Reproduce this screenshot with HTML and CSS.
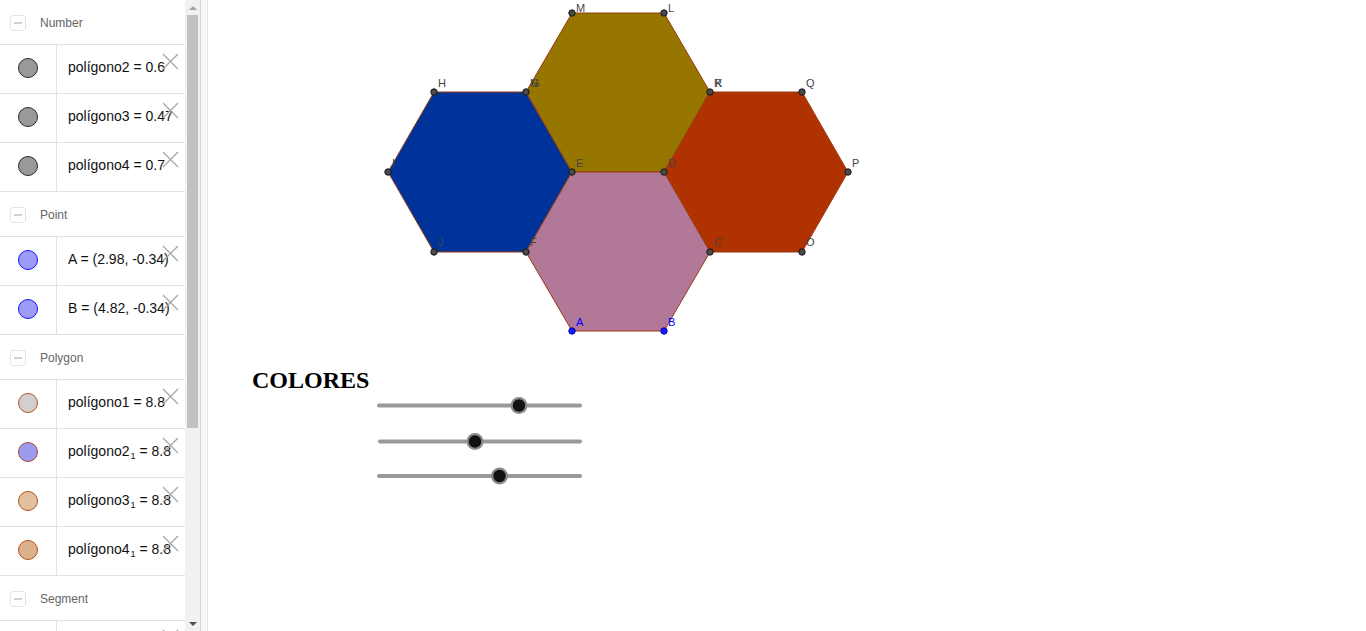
FILE: index.html
```html
<!DOCTYPE html>
<html>
<head>
<meta charset="utf-8">
<title>COLORES</title>
<link rel="stylesheet" href="styles.css">
</head>
<body>
<div class="app">
  <aside class="algebra">
    <div class="list">
      <div class="group"><span class="toggle"></span><span class="group-name">Number</span></div>
      <div class="item"><div class="marble-cell"><span class="marble m-number"></span></div><div class="formula">polígono2 = 0.6</div><svg class="close" viewBox="0 0 17 17"><path d="M1 1L16 16M16 1L1 16"/></svg></div>
      <div class="item"><div class="marble-cell"><span class="marble m-number"></span></div><div class="formula">polígono3 = 0.47</div><svg class="close" viewBox="0 0 17 17"><path d="M1 1L16 16M16 1L1 16"/></svg></div>
      <div class="item"><div class="marble-cell"><span class="marble m-number"></span></div><div class="formula">polígono4 = 0.7</div><svg class="close" viewBox="0 0 17 17"><path d="M1 1L16 16M16 1L1 16"/></svg></div>

      <div class="group"><span class="toggle"></span><span class="group-name">Point</span></div>
      <div class="item"><div class="marble-cell"><span class="marble m-point"></span></div><div class="formula">A = (2.98, -0.34)</div><svg class="close" viewBox="0 0 17 17"><path d="M1 1L16 16M16 1L1 16"/></svg></div>
      <div class="item"><div class="marble-cell"><span class="marble m-point"></span></div><div class="formula">B = (4.82, -0.34)</div><svg class="close" viewBox="0 0 17 17"><path d="M1 1L16 16M16 1L1 16"/></svg></div>

      <div class="group"><span class="toggle"></span><span class="group-name">Polygon</span></div>
      <div class="item"><div class="marble-cell"><span class="marble m-poly1"></span></div><div class="formula">polígono1 = 8.8</div><svg class="close" viewBox="0 0 17 17"><path d="M1 1L16 16M16 1L1 16"/></svg></div>
      <div class="item"><div class="marble-cell"><span class="marble m-poly2"></span></div><div class="formula">polígono2<sub>1</sub> = 8.8</div><svg class="close" viewBox="0 0 17 17"><path d="M1 1L16 16M16 1L1 16"/></svg></div>
      <div class="item"><div class="marble-cell"><span class="marble m-poly3"></span></div><div class="formula">polígono3<sub>1</sub> = 8.8</div><svg class="close" viewBox="0 0 17 17"><path d="M1 1L16 16M16 1L1 16"/></svg></div>
      <div class="item"><div class="marble-cell"><span class="marble m-poly4"></span></div><div class="formula">polígono4<sub>1</sub> = 8.8</div><svg class="close" viewBox="0 0 17 17"><path d="M1 1L16 16M16 1L1 16"/></svg></div>

      <div class="group"><span class="toggle"></span><span class="group-name">Segment</span></div>
      <div class="item"><div class="marble-cell"><span class="marble m-seg"></span></div><div class="formula"></div><svg class="close" viewBox="0 0 17 17"><path d="M1 1L16 16M16 1L1 16"/></svg></div>
    </div>
    <div class="scrollbar">
      <div class="sb-btn"><span class="arrow-up"></span></div>
      <div class="thumb"></div>
      <div class="sb-track"></div>
      <div class="sb-btn"><span class="arrow-down"></span></div>
    </div>
  </aside>
  <div class="splitter"></div>
  <main class="canvas">
    <svg class="graphics" width="1158" height="631" viewBox="208 0 1158 631">
      <g class="hex">
        <polygon points="434,92 526,92 572,172 526,252 434,252 388,172" fill="#003399"/>
        <polygon points="572,13 664,13 710,92 664,172 572,172 526,92" fill="#977600"/>
        <polygon points="710,92 802,92 848,172 802,252 710,252 664,172" fill="#b03200"/>
        <polygon points="572,331 664,331 710,252 664,172 572,172 526,252" fill="#b27898"/>
      </g>
      <g class="pts">
        <circle cx="434" cy="92" r="3.2"/><circle cx="526" cy="92" r="3.2"/>
        <circle cx="572" cy="13" r="3.2"/><circle cx="664" cy="13" r="3.2"/>
        <circle cx="710" cy="92" r="3.2"/><circle cx="802" cy="92" r="3.2"/>
        <circle cx="388" cy="172" r="3.2"/><circle cx="572" cy="172" r="3.2"/>
        <circle cx="664" cy="172" r="3.2"/><circle cx="848" cy="172" r="3.2"/>
        <circle cx="434" cy="252" r="3.2"/><circle cx="526" cy="252" r="3.2"/>
        <circle cx="710" cy="252" r="3.2"/><circle cx="802" cy="252" r="3.2"/>
        <circle class="blue" cx="572" cy="331" r="3.2"/><circle class="blue" cx="664" cy="331" r="3.2"/>
      </g>
      <g class="labels">
        <text x="576" y="12">M</text>
        <text x="668" y="12">L</text>
        <text x="438" y="87">H</text>
        <text x="530" y="87">N</text><text x="531" y="87">G</text>
        <text x="714" y="87">R</text><text x="715" y="87">K</text>
        <text x="806" y="87">Q</text>
        <text x="392" y="167">I</text>
        <text x="576" y="167">E</text>
        <text x="668" y="167">D</text>
        <text x="852" y="167">P</text>
        <text x="438" y="246">J</text>
        <text x="530" y="246">F</text>
        <text x="714" y="246">C</text>
        <text x="806" y="246">O</text>
        <text class="blue" x="576" y="326">A</text>
        <text class="blue" x="668" y="326">B</text>
      </g>
      <text class="title" x="252" y="388">COLORES</text>
      <g class="slider">
        <line x1="379" y1="405.5" x2="580" y2="405.5"/>
        <circle class="halo" cx="519" cy="405.5" r="8.5"/><circle class="knob" cx="519" cy="405.5" r="6.2"/>
      </g>
      <g class="slider">
        <line x1="380" y1="441.5" x2="580" y2="441.5"/>
        <circle class="halo" cx="475" cy="441.5" r="8.5"/><circle class="knob" cx="475" cy="441.5" r="6.2"/>
      </g>
      <g class="slider">
        <line x1="379" y1="476" x2="580" y2="476"/>
        <circle class="halo" cx="499.5" cy="476" r="8.5"/><circle class="knob" cx="499.5" cy="476" r="6.2"/>
      </g>
    </svg>
  </main>
</div>
</body>
</html>
```

FILE: styles.css
```css
html, body {
  margin: 0;
  padding: 0;
  height: 100%;
  background: #fff;
  overflow: hidden;
}

.app {
  display: flex;
  height: 631px;
  font-family: "Liberation Sans", Arial, sans-serif;
}

.algebra {
  display: flex;
  width: 200px;
  flex: none;
  height: 100%;
}

.list {
  width: 185px;
  height: 100%;
  overflow: hidden;
  background: #fff;
}

.group {
  display: flex;
  align-items: center;
  height: 44px;
  padding-top: 2px;
  box-sizing: border-box;
  border-bottom: 1px solid #e2e2e2;
  height: 45px;
}

.toggle {
  width: 14px;
  height: 14px;
  margin-left: 10px;
  border: 1px solid #e4e4e4;
  border-radius: 3px;
  display: flex;
  align-items: center;
  justify-content: center;
}

.toggle::after {
  content: "";
  width: 8px;
  height: 2px;
  background: #cfcfcf;
}

.group-name {
  margin-left: 14px;
  font-size: 12px;
  color: #666;
}

.item {
  position: relative;
  display: flex;
  height: 48px;
  border-bottom: 1px solid #e2e2e2;
}

.marble-cell {
  width: 56px;
  flex: none;
  padding-bottom: 3px;
  box-sizing: border-box;
  border-right: 1px solid #e2e2e2;
  display: flex;
  align-items: center;
  justify-content: center;
  width: 57px;
}

.marble {
  width: 18px;
  height: 18px;
  border-radius: 50%;
  border: 1px solid #333;
}

.m-number { background: #999; border-color: #2b2b2b; }
.m-point { background: #9c9cf6; border-color: #1414ff; }
.m-poly1 { background: #d2cfcf; border-color: #b5501f; }
.m-poly2 { background: #9d9bee; border-color: #a64a36; }
.m-poly3 { background: #e1c09d; border-color: #b5501f; }
.m-poly4 { background: #dcb18c; border-color: #b5501f; }
.m-seg { background: #999; border-color: #2b2b2b; }

.formula {
  padding-left: 11px;
  line-height: 44px;
  font-size: 14px;
  color: #111;
  white-space: nowrap;
}

.formula sub {
  font-size: 9px;
  line-height: 0;
  vertical-align: -3px;
  margin-left: 1px;
}

.close {
  position: absolute;
  right: 6px;
  top: 8px;
  width: 17px;
  height: 17px;
  fill: none;
  stroke: #a8a8a8;
  stroke-width: 1.4;
}

.scrollbar {
  width: 15px;
  flex: none;
  height: 100%;
  background: #f1f1f1;
  display: flex;
  flex-direction: column;
}

.sb-btn {
  height: 15px;
  flex: none;
  display: flex;
  align-items: center;
  justify-content: center;
}

.arrow-up {
  width: 0;
  height: 0;
  border-left: 4px solid transparent;
  border-right: 4px solid transparent;
  border-bottom: 4px solid #a3a3a3;
}

.arrow-down {
  width: 0;
  height: 0;
  border-left: 4px solid transparent;
  border-right: 4px solid transparent;
  border-top: 4px solid #505050;
}

.thumb {
  height: 413px;
  margin: 0 2px;
  background: #c1c1c1;
  flex: none;
}

.sb-track {
  flex: 1;
}

.splitter {
  width: 6px;
  flex: none;
  height: 100%;
  background: #f8f8f8;
  border-left: 1px solid #d6d6d6;
  border-right: 1px solid #e6e6e6;
}

.canvas {
  flex: 1;
  height: 100%;
  overflow: hidden;
  background: #fff;
}

.graphics {
  display: block;
}

.hex polygon {
  stroke: #9a3a12;
  stroke-width: 1;
  stroke-linejoin: round;
}

.pts circle {
  fill: #4a4a4a;
  stroke: #151515;
  stroke-width: 1;
}

.pts circle.blue {
  fill: #1a1aff;
  stroke: #0000aa;
}

.labels text {
  font-family: "Liberation Sans", Arial, sans-serif;
  font-size: 11px;
  fill: #444;
}

.labels text.blue {
  fill: #0000ff;
}

.title {
  font-family: "Liberation Serif", "Times New Roman", serif;
  font-weight: bold;
  font-size: 24px;
  fill: #000;
}

.slider line {
  stroke: #999;
  stroke-width: 4;
  stroke-linecap: round;
}

.slider .halo {
  fill: #8a8a8a;
}

.slider .knob {
  fill: #111;
}
```
